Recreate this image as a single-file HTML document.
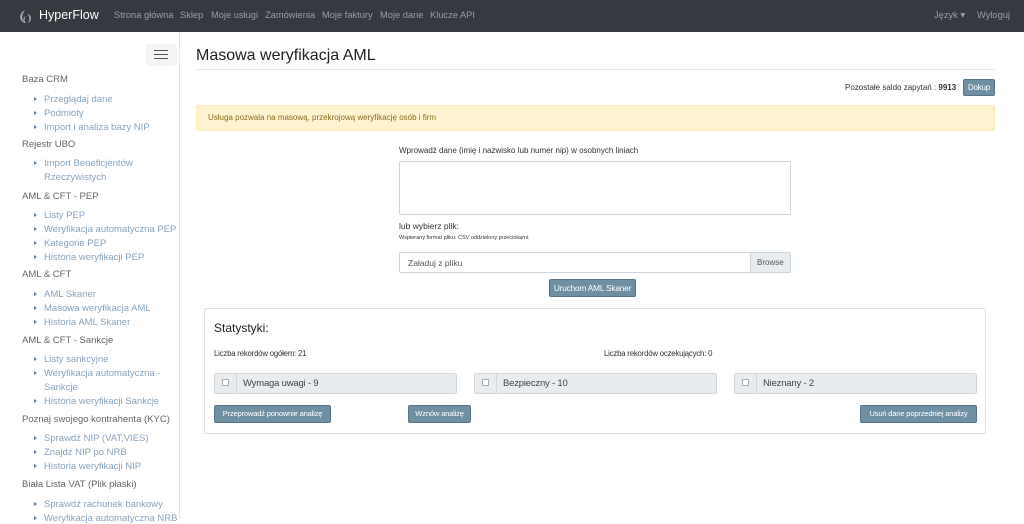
<!DOCTYPE html>
<html><head><meta charset="utf-8"><style>
*{box-sizing:border-box;margin:0;padding:0}
body{width:1024px;height:519px;overflow:hidden;font-family:"Liberation Sans",sans-serif;background:#fff;position:relative;color:#212529}
.nav{position:absolute;left:0;top:0;width:1024px;height:32px;background:#343a40}
.nav span{position:absolute;top:10px;font-size:9.3px;color:#9a9da0}
.brand{left:39px!important;top:8px!important;font-size:12.5px!important;color:#fff!important}
.side{position:absolute;left:0;top:32px;width:180px;height:487px;border-right:1px solid #e6e6e6}
.ham{position:absolute;left:146px;top:12px;width:31px;height:22px;background:#f3f4f5;border-radius:3px}
.ham i{position:absolute;left:8px;width:14px;height:1px;background:#555}
.side .h{position:absolute;left:22px;font-size:9.5px;color:#666}
.side .l{position:absolute;left:34px;font-size:9.5px;color:#87a3bd}
.side .l:before{content:"";position:absolute;left:0;top:3px;border-left:3px solid #5b7fa3;border-top:2.5px solid transparent;border-bottom:2.5px solid transparent}
.side .l b{font-weight:normal;margin-left:10px}
.abs{position:absolute}
.btn{position:absolute;background:#6f8fa3;color:#fff;border:1px solid #5a7585;border-radius:2px;font-size:7.6px;text-align:center;letter-spacing:-0.2px;white-space:nowrap}
.inp{position:absolute;background:#e9ecef;border:1px solid #d5d8db;border-radius:2px}
.inp .cb{position:absolute;left:7px;top:5px;width:7px;height:7px;border:1px solid #aaa;border-radius:1px;background:#fff}
.inp .sep{position:absolute;left:21px;top:0;bottom:0;width:1px;background:#d5d8db;}
.inp span{position:absolute;left:28px;top:4px;font-size:9.5px;color:#444;letter-spacing:-0.2px}
</style></head><body>
<div class="nav">
<svg class="abs" style="left:18px;top:9px" width="14" height="15" viewBox="0 0 14 15"><path d="M7 1C3 3 1 7 3 11c1 2 3 3 5 3-2-2-2-5 0-7-3 1-3 4-2 6C3 10 4 5 7 1zM9 5c3 2 3 6 1 9 2-1 3-3 3-5 0-2-2-4-4-4z" fill="#aab"/></svg>
<span class="brand">HyperFlow</span>
<span style="left:114px">Strona główna</span><span style="left:180px">Sklep</span><span style="left:211px">Moje usługi</span><span style="left:265px">Zamówienia</span><span style="left:322px">Moje faktury</span><span style="left:380px">Moje dane</span><span style="left:430px">Klucze API</span>
<span style="left:934px">Język ▾</span><span style="left:977px">Wyloguj</span>
</div>
<div class="side">
<div class="ham"><i style="top:6px"></i><i style="top:10px"></i><i style="top:14px"></i></div>
<div class="h" style="top:42px">Baza CRM</div>
<div class="l" style="top:62px"><b>Przeglądaj dane</b></div>
<div class="l" style="top:76px"><b>Podmioty</b></div>
<div class="l" style="top:90px"><b>Import i analiza bazy NIP</b></div>
<div class="h" style="top:107px">Rejestr UBO</div>
<div class="l" style="top:126px"><b>Import Beneficjentów</b></div>
<div class="abs" style="top:140px;left:44px;font-size:9.5px;color:#87a3bd">Rzeczywistych</div>
<div class="h" style="top:159px">AML &amp; CFT - PEP</div>
<div class="l" style="top:178px"><b>Listy PEP</b></div>
<div class="l" style="top:192px"><b>Weryfikacja automatyczna PEP</b></div>
<div class="l" style="top:206px"><b>Kategorie PEP</b></div>
<div class="l" style="top:220px"><b>Historia weryfikacji PEP</b></div>
<div class="h" style="top:237px">AML &amp; CFT</div>
<div class="l" style="top:257px"><b>AML Skaner</b></div>
<div class="l" style="top:271px"><b>Masowa weryfikacja AML</b></div>
<div class="l" style="top:285px"><b>Historia AML Skaner</b></div>
<div class="h" style="top:303px">AML &amp; CFT - Sankcje</div>
<div class="l" style="top:322px"><b>Listy sankcyjne</b></div>
<div class="l" style="top:336px"><b>Weryfikacja automatyczna -</b></div>
<div class="abs" style="top:350px;left:44px;font-size:9.5px;color:#87a3bd">Sankcje</div>
<div class="l" style="top:364px"><b>Historia weryfikacji Sankcje</b></div>
<div class="h" style="top:382px">Poznaj swojego kontrahenta (KYC)</div>
<div class="l" style="top:401px"><b>Sprawdź NIP (VAT,VIES)</b></div>
<div class="l" style="top:415px"><b>Znajdź NIP po NRB</b></div>
<div class="l" style="top:429px"><b>Historia weryfikacji NIP</b></div>
<div class="h" style="top:447px">Biała Lista VAT (Plik płaski)</div>
<div class="l" style="top:467px"><b>Sprawdź rachunek bankowy</b></div>
<div class="l" style="top:481px"><b>Weryfikacja automatyczna NRB</b></div>
</div>
<div class="abs" style="left:196px;top:47px;font-size:16px;color:#222">Masowa weryfikacja AML</div>
<div class="abs" style="left:196px;top:69px;width:799px;height:1px;background:#e6e6e6"></div>
<div class="abs" style="left:845px;top:83px;font-size:8px;color:#333">Pozostałe saldo zapytań : <b>9913</b></div>
<div class="btn" style="left:963px;top:79px;width:32px;height:17px;line-height:15px;font-size:8px">Dokup</div>
<div class="abs" style="left:196px;top:105px;width:799px;height:26px;background:#fdf3d0;border:1px solid #fbecb8;border-radius:2px;font-size:8px;color:#8a6d1c;padding:7px 11px">Usługa pozwala na masową, przekrojową weryfikację osób i firm</div>
<div class="abs" style="left:399px;top:146px;font-size:8px;color:#333">Wprowadź dane (imię i nazwisko lub numer nip) w osobnych liniach</div>
<div class="abs" style="left:399px;top:161px;width:392px;height:54px;border:1px solid #ced4da;border-radius:2px"></div>
<div class="abs" style="left:399px;top:221px;font-size:8.5px;color:#333">lub wybierz plik:</div>
<div class="abs" style="left:399px;top:235px;font-size:5.5px;color:#333">Wspierany format pliku: CSV oddzielony przecinkami.</div>
<div class="abs" style="left:399px;top:252px;width:392px;height:21px;border:1px solid #ced4da;border-radius:2px;font-size:8.5px;color:#555;padding:5px 8px">Załaduj z pliku<div class="abs" style="right:0;top:0;width:40px;height:19px;background:#e9ecef;border-left:1px solid #ced4da;padding:5px 6px;font-size:8px">Browse</div></div>
<div class="btn" style="left:549px;top:279px;width:87px;height:18px;line-height:16px;font-size:8.3px">Uruchom AML Skaner</div>
<div class="abs" style="left:204px;top:308px;width:782px;height:126px;border:1px solid #e2e2e2;border-radius:2px"></div>
<div class="abs" style="left:214px;top:321px;font-size:12px;color:#222">Statystyki:</div>
<div class="abs" style="left:214px;top:349px;font-size:7.8px;color:#333;letter-spacing:-0.2px">Liczba rekordów ogółem: 21</div>
<div class="abs" style="left:604px;top:349px;font-size:7.8px;color:#333;letter-spacing:-0.2px">Liczba rekordów oczekujących: 0</div>
<div class="inp" style="left:214px;top:373px;width:243px;height:21px"><div class="cb"></div><div class="sep"></div><span>Wymaga uwagi - 9</span></div>
<div class="inp" style="left:474px;top:373px;width:243px;height:21px"><div class="cb"></div><div class="sep"></div><span>Bezpieczny - 10</span></div>
<div class="inp" style="left:734px;top:373px;width:243px;height:21px"><div class="cb"></div><div class="sep"></div><span>Nieznany - 2</span></div>
<div class="btn" style="left:214px;top:405px;width:117px;height:18px;line-height:16px">Przeprowadź ponownie analizę</div>
<div class="btn" style="left:408px;top:405px;width:63px;height:18px;line-height:16px">Wznów analizę</div>
<div class="btn" style="left:860px;top:405px;width:117px;height:18px;line-height:16px">Usuń dane poprzedniej analizy</div>
</body></html>
